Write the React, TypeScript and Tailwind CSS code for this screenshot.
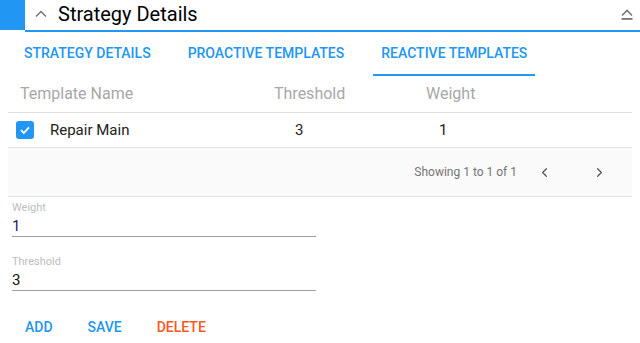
import { ChevronLeft, ChevronRight } from 'lucide-react'

const TABS = ['Strategy Details', 'Proactive Templates', 'Reactive Templates']

function CollapseIcon() {
  return (
    <svg width="14" height="14" viewBox="0 0 14 14" className="shrink-0">
      <path d="M2 8.5 L7 3.5 L12 8.5" fill="none" stroke="#757575" strokeWidth="1.6" />
      <rect x="1.5" y="11" width="11" height="1.8" fill="#757575" />
    </svg>
  )
}

function Field({ label, value, valueClass }: { label: string; value: string; valueClass: string }) {
  return (
    <div className="w-[304px] ml-[12px] border-b border-[#9e9e9e] flex flex-col">
      <span className="text-[11px] leading-[13px] text-[#bdbdbd]">{label}</span>
      <span className={`text-[15px] leading-[20px] pt-[2px] ${valueClass}`}>{value}</span>
    </div>
  )
}

export default function App() {
  return (
    <div className="w-[640px] h-[343px] bg-white overflow-hidden font-['Roboto',sans-serif]">

      {/* Panel header */}
      <div className="flex h-[32px]">
        <div className="w-[25px] h-[30px] bg-[#2196f3]" />
        <div className="flex-1 flex items-center border-b-2 border-[#2196f3] pb-[2px] pr-[6px]">
          <svg width="14" height="10" viewBox="0 0 14 10" className="ml-[9px]">
            <path d="M2 7.5 L7 2.5 L12 7.5" fill="none" stroke="#757575" strokeWidth="1.5" />
          </svg>
          <h2 className="ml-[10px] text-[20px] leading-none text-black">Strategy Details</h2>
          <div className="ml-auto"><CollapseIcon /></div>
        </div>
      </div>

      {/* Tabs */}
      <div className="flex pl-[16px] gap-[21px] h-[44px]">
        {TABS.map((t, i) => (
          <div
            key={t}
            className={`flex items-center px-[8px] text-[14px] font-medium uppercase text-[#2196f3] border-b-2
                        ${i === 2 ? 'border-[#2196f3]' : 'border-transparent'}`}
          >
            {t}
          </div>
        ))}
      </div>

      {/* Table */}
      <div className="mx-[8px]">
        <div className="flex items-center h-[36px] text-[16px] text-[#a8a8a8]">
          <span className="w-[266px] pl-[12px]">Template Name</span>
          <span className="w-[152px]">Threshold</span>
          <span>Weight</span>
        </div>
        <div className="flex items-center h-[36px] border-y border-[#e0e0e0] text-[15px] text-[#212121]">
          <span className="ml-[8px] w-[18px] h-[18px] rounded-[3px] bg-[#2196f3] flex items-center justify-center">
            <svg width="12" height="12" viewBox="0 0 12 12">
              <path d="M2 6.2 L4.8 9 L10 3.4" fill="none" stroke="white" strokeWidth="1.8" />
            </svg>
          </span>
          <span className="ml-[16px] w-[245px]">Repair Main</span>
          <span className="w-[144px]">3</span>
          <span>1</span>
        </div>
        <div className="flex items-center justify-end h-[49px] bg-[#fafafa] border-b border-[#e0e0e0] text-[12px] text-[#757575]">
          <span>Showing 1 to 1 of 1</span>
          <ChevronLeft size={15} strokeWidth={2} className="ml-[20px] text-[#555]" />
          <ChevronRight size={15} strokeWidth={2} className="ml-[40px] mr-[25px] text-[#555]" />
        </div>
      </div>

      {/* Form */}
      <div className="flex flex-col pt-[4px] gap-[18px]">
        <Field label="Weight" value="1" valueClass="text-[#1a1a6e]" />
        <Field label="Threshold" value="3" valueClass="text-[#111]" />
      </div>

      {/* Actions */}
      <div className="flex gap-[35px] pl-[25px] mt-[26px] text-[14px] font-medium uppercase">
        <span className="text-[#2196f3]">Add</span>
        <span className="text-[#2196f3]">Save</span>
        <span className="text-[#ff5722]">Delete</span>
      </div>

    </div>
  )
}
